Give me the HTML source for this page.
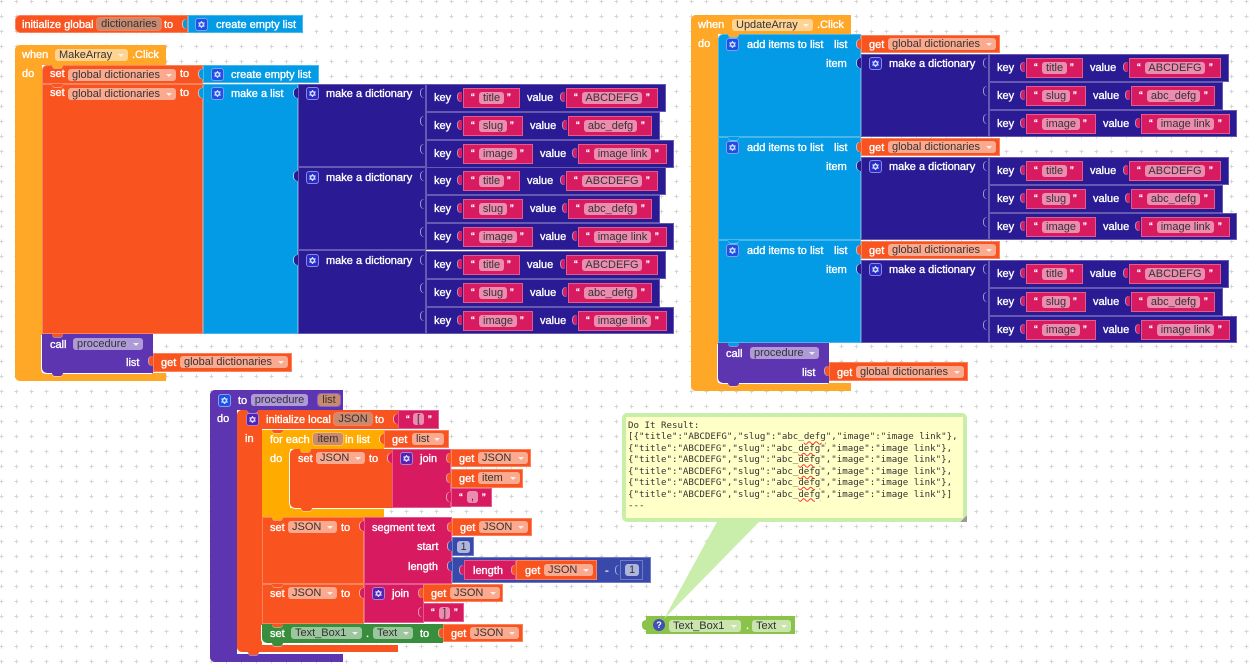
<!DOCTYPE html>
<html><head><meta charset="utf-8"><title>Blocks</title>
<style>
html,body{margin:0;padding:0;background:#fff}
#a{position:relative;width:1252px;height:671px;overflow:hidden;background:#fff;filter:blur(.3px)}
#a div,#a b,#a i,#a u,#a svg.m{position:absolute}
.k{box-shadow:inset 0 0 0 1px rgba(255,255,255,.28)}
.O{background:#f9541f}.B{background:#039be5}.D{background:#2a1a94}.P{background:#d81b60}
.Y{background:#ffa726}.F{background:#ffab00}.V{background:#5e35b1}.G{background:#388e3c}.L{background:#8bc34a}.N{background:#3949ab}
b{font:11px/14px "Liberation Sans",Arial,sans-serif;color:#fff;-webkit-text-stroke:.35px #fff;white-space:nowrap;margin-top:1px}
i{font:11px/12px "Liberation Sans",Arial,sans-serif;color:#333;height:12px;border-radius:3px;background:rgba(255,255,255,.5);text-align:center;white-space:nowrap;box-sizing:border-box}
i.d{text-align:left;padding-left:4px}
i.d:after{content:"";position:absolute;right:4px;top:5px;border-left:3px solid transparent;border-right:3px solid transparent;border-top:3px solid rgba(255,255,255,.8)}
i.v{background:#c98a70;box-shadow:0 0 0 1px rgba(255,255,255,.25);height:12px}
u{display:block;width:4px;height:10px;margin-left:1px;border-radius:4px 0 0 4px;box-shadow:-1px 0 0 rgba(255,255,255,.55);text-decoration:none}
.n{width:11px;height:3px;border-radius:0 0 5px 5px;box-shadow:0 1px 0 rgba(255,255,255,.4)}
svg.m{width:13px;height:13px;border-radius:3px;box-sizing:border-box;background:#1c50e6;box-shadow:inset 0 0 0 1px rgba(255,255,255,.45)}
svg.w{background:#2a2ac4}
svg.x{background:#5a1fb0}
.r{height:28px}
.r>u{left:-6px;top:4px}
.kl{left:8px;top:6px}
.kp,.vp{top:4px;height:20px}
.kp>u,.vp>u{left:-6px;top:4px}
.q{top:2px;left:8px}
.kf,.vf{left:16px;top:4px}
.r1{width:240px}.r1 .kp{left:37px;width:57px}.r1 .kf{width:25px}.r1 .kq{left:44px}.r1 .vl{left:101px;top:6px}.r1 .vp{left:140px;width:92px}.r1 .vf{width:60px}.r1 .vq{left:80px}
.r2{width:234px}.r2 .kp{left:37px;width:60px}.r2 .kf{width:28px}.r2 .kq{left:47px}.r2 .vl{left:104px;top:6px}.r2 .vp{left:142px;width:84px}.r2 .vf{width:53px}.r2 .vq{left:73px}
.r3{width:248px}.r3 .kp{left:37px;width:70px}.r3 .kf{width:38px}.r3 .kq{left:57px}.r3 .vl{left:114px;top:6px}.r3 .vp{left:152px;width:89px}.r3 .vf{width:57px}.r3 .vq{left:77px}
pre{position:absolute;margin:0;left:628px;top:421px;font:9.15px/11.43px "DejaVu Sans Mono",monospace;color:#333}
pre span{text-decoration:underline wavy #f33;text-decoration-thickness:1px}
</style></head><body><div id="a">
<svg width="0" height="0" style="position:absolute"><defs><symbol id="g" viewBox="0 0 13 13"><circle cx="6.5" cy="6.5" r="2" fill="none" stroke="#cfdcff" stroke-width="1.5"/><path d="M6.5 3v1.4M6.5 8.6V10M3.4 4.7l1.3.7M8.3 7.6l1.3.7M3.4 8.3l1.3-.7M8.3 5.4l1.3-.7" stroke="#cfdcff" stroke-width="1.2"/></symbol></defs></svg>
<svg width="1252" height="671" style="position:absolute;left:0;top:0"><defs><pattern id="p" x="-2" y="-2" width="15" height="15" patternUnits="userSpaceOnUse"><path d="M1.5 3.5h4M3.5 1.5v4" stroke="#d6d6d6" stroke-width="1" fill="none"/></pattern></defs><rect width="1252" height="671" fill="url(#p)"/></svg>

<!-- init global -->
<div class="k O" style="left:15px;top:15px;width:173px;height:18px;border-radius:5px 0 0 5px"></div>
<b style="left:22px;top:17px">initialize global</b><i class="v" style="left:97px;top:18px;width:64px">dictionaries</i><b style="left:164px;top:17px">to</b>
<div class="k B" style="left:188px;top:15px;width:115px;height:18px"></div><u class="B" style="left:182px;top:19px"></u>
<svg class="m" style="left:195px;top:18px"><use href="#g"/></svg><b style="left:216px;top:17px">create empty list</b>

<!-- when MakeArray -->
<div class="Y" style="left:15px;top:45px;width:151px;height:20px;border-radius:5px 0 0 0"></div>
<div class="Y" style="left:15px;top:45px;width:27px;height:336px;border-radius:5px 0 0 5px"></div>
<div class="Y" style="left:15px;top:373px;width:151px;height:8px;border-radius:0 0 0 5px"></div>
<b style="left:22px;top:47px">when</b><i class="d" style="left:55px;top:49px;width:73px">MakeArray</i><b style="left:132px;top:47px">.Click</b><b style="left:22px;top:66px">do</b>

<div class="k O" style="left:42px;top:65px;width:161px;height:19px;border-radius:5px 0 0 0"></div>
<div class="n Y" style="left:52px;top:65px"></div>
<b style="left:50px;top:66px">set</b><i class="d" style="left:68px;top:69px;width:108px">global dictionaries</i><b style="left:180px;top:66px">to</b>
<div class="k B" style="left:203px;top:65px;width:116px;height:18px"></div><u class="B" style="left:198px;top:69px"></u>
<svg class="m" style="left:211px;top:68px"><use href="#g"/></svg><b style="left:231px;top:67px">create empty list</b>

<div class="k O" style="left:42px;top:84px;width:161px;height:250px"></div>
<div class="n O" style="left:52px;top:84px"></div>
<b style="left:50px;top:85px">set</b><i class="d" style="left:68px;top:88px;width:108px">global dictionaries</i><b style="left:180px;top:85px">to</b>
<div class="k B" style="left:203px;top:84px;width:95px;height:250px"></div><u class="B" style="left:198px;top:88px"></u>
<svg class="m" style="left:211px;top:87px"><use href="#g"/></svg><b style="left:231px;top:86px">make a list</b>

<div class="k D" style="left:298px;top:84px;width:128px;height:83px"></div><u class="D" style="left:293px;top:88px"></u>
<svg class="m w" style="left:306px;top:87px"><use href="#g"/></svg><b style="left:326px;top:86px">make a dictionary</b>
<div class="k D" style="left:298px;top:167px;width:128px;height:83px"></div><u class="D" style="left:293px;top:171px"></u>
<svg class="m w" style="left:306px;top:171px"><use href="#g"/></svg><b style="left:326px;top:170px">make a dictionary</b>
<div class="k D" style="left:298px;top:250px;width:128px;height:84px"></div><u class="D" style="left:293px;top:255px"></u>
<svg class="m w" style="left:306px;top:254px"><use href="#g"/></svg><b style="left:326px;top:253px">make a dictionary</b>

<div class="k D r r1" style="left:426px;top:84px"><u class="D"></u><b class="kl">key</b><div class="k P kp"><u class="P"></u><b class="q">“</b><i class="kf">title</i><b class="q kq">”</b></div><b class="vl">value</b><div class="k P vp"><u class="P"></u><b class="q">“</b><i class="vf">ABCDEFG</i><b class="q vq">”</b></div></div>
<div class="k D r r2" style="left:426px;top:112px"><u class="D"></u><b class="kl">key</b><div class="k P kp"><u class="P"></u><b class="q">“</b><i class="kf">slug</i><b class="q kq">”</b></div><b class="vl">value</b><div class="k P vp"><u class="P"></u><b class="q">“</b><i class="vf">abc_defg</i><b class="q vq">”</b></div></div>
<div class="k D r r3" style="left:426px;top:140px"><u class="D"></u><b class="kl">key</b><div class="k P kp"><u class="P"></u><b class="q">“</b><i class="kf">image</i><b class="q kq">”</b></div><b class="vl">value</b><div class="k P vp"><u class="P"></u><b class="q">“</b><i class="vf">image link</i><b class="q vq">”</b></div></div>
<div class="k D r r1" style="left:426px;top:167px"><u class="D"></u><b class="kl">key</b><div class="k P kp"><u class="P"></u><b class="q">“</b><i class="kf">title</i><b class="q kq">”</b></div><b class="vl">value</b><div class="k P vp"><u class="P"></u><b class="q">“</b><i class="vf">ABCDEFG</i><b class="q vq">”</b></div></div>
<div class="k D r r2" style="left:426px;top:195px"><u class="D"></u><b class="kl">key</b><div class="k P kp"><u class="P"></u><b class="q">“</b><i class="kf">slug</i><b class="q kq">”</b></div><b class="vl">value</b><div class="k P vp"><u class="P"></u><b class="q">“</b><i class="vf">abc_defg</i><b class="q vq">”</b></div></div>
<div class="k D r r3" style="left:426px;top:223px;height:27px"><u class="D"></u><b class="kl">key</b><div class="k P kp"><u class="P"></u><b class="q">“</b><i class="kf">image</i><b class="q kq">”</b></div><b class="vl">value</b><div class="k P vp"><u class="P"></u><b class="q">“</b><i class="vf">image link</i><b class="q vq">”</b></div></div>
<div class="k D r r1" style="left:426px;top:251px"><u class="D"></u><b class="kl">key</b><div class="k P kp"><u class="P"></u><b class="q">“</b><i class="kf">title</i><b class="q kq">”</b></div><b class="vl">value</b><div class="k P vp"><u class="P"></u><b class="q">“</b><i class="vf">ABCDEFG</i><b class="q vq">”</b></div></div>
<div class="k D r r2" style="left:426px;top:279px"><u class="D"></u><b class="kl">key</b><div class="k P kp"><u class="P"></u><b class="q">“</b><i class="kf">slug</i><b class="q kq">”</b></div><b class="vl">value</b><div class="k P vp"><u class="P"></u><b class="q">“</b><i class="vf">abc_defg</i><b class="q vq">”</b></div></div>
<div class="k D r r3" style="left:426px;top:307px;height:27px"><u class="D"></u><b class="kl">key</b><div class="k P kp"><u class="P"></u><b class="q">“</b><i class="kf">image</i><b class="q kq">”</b></div><b class="vl">value</b><div class="k P vp"><u class="P"></u><b class="q">“</b><i class="vf">image link</i><b class="q vq">”</b></div></div>

<div class="V" style="left:42px;top:334px;width:111px;height:39px;border-radius:0 0 0 5px;box-shadow:-1px 1px 0 #fff"></div>
<div class="n O" style="left:52px;top:334px"></div><div class="n V" style="left:52px;top:373px"></div>
<b style="left:50px;top:337px">call</b><i class="d" style="left:73px;top:338px;width:70px">procedure</i><b style="left:126px;top:355px">list</b>
<div class="k O" style="left:153px;top:353px;width:139px;height:19px"></div><u class="O" style="left:148px;top:356px"></u>
<b style="left:161px;top:355px">get</b><i class="d" style="left:180px;top:356px;width:108px">global dictionaries</i>

<!-- when UpdateArray -->
<div class="Y" style="left:691px;top:15px;width:160px;height:19px;border-radius:5px 0 0 0"></div>
<div class="Y" style="left:691px;top:15px;width:27px;height:376px;border-radius:5px 0 0 5px"></div>
<div class="Y" style="left:691px;top:383px;width:160px;height:8px;border-radius:0 0 0 5px"></div>
<b style="left:698px;top:17px">when</b><i class="d" style="left:732px;top:19px;width:81px">UpdateArray</i><b style="left:817px;top:17px">.Click</b><b style="left:698px;top:36px">do</b>

<div class="k B" style="left:718px;top:34px;width:143px;height:103px;border-radius:5px 0 0 0"></div><div class="n Y" style="left:728px;top:34px"></div>
<svg class="m" style="left:726px;top:38px"><use href="#g"/></svg><b style="left:747px;top:37px">add items to list</b><b style="left:834px;top:37px">list</b><b style="left:826px;top:56px">item</b>
<div class="k O" style="left:861px;top:35px;width:139px;height:18px"></div><u class="O" style="left:856px;top:39px"></u><b style="left:869px;top:37px">get</b><i class="d" style="left:888px;top:38px;width:108px">global dictionaries</i>
<div class="k D" style="left:861px;top:54px;width:128px;height:83px"></div><u class="D" style="left:856px;top:58px"></u><svg class="m w" style="left:869px;top:57px"><use href="#g"/></svg><b style="left:889px;top:56px">make a dictionary</b>

<div class="k B" style="left:718px;top:137px;width:143px;height:103px"></div><div class="n B" style="left:728px;top:137px"></div>
<svg class="m" style="left:726px;top:141px"><use href="#g"/></svg><b style="left:747px;top:140px">add items to list</b><b style="left:834px;top:140px">list</b><b style="left:826px;top:159px">item</b>
<div class="k O" style="left:861px;top:138px;width:139px;height:18px"></div><u class="O" style="left:856px;top:142px"></u><b style="left:869px;top:140px">get</b><i class="d" style="left:888px;top:141px;width:108px">global dictionaries</i>
<div class="k D" style="left:861px;top:157px;width:128px;height:83px"></div><u class="D" style="left:856px;top:161px"></u><svg class="m w" style="left:869px;top:160px"><use href="#g"/></svg><b style="left:889px;top:159px">make a dictionary</b>

<div class="k B" style="left:718px;top:240px;width:143px;height:103px"></div><div class="n B" style="left:728px;top:240px"></div>
<svg class="m" style="left:726px;top:244px"><use href="#g"/></svg><b style="left:747px;top:243px">add items to list</b><b style="left:834px;top:243px">list</b><b style="left:826px;top:262px">item</b>
<div class="k O" style="left:861px;top:241px;width:139px;height:18px"></div><u class="O" style="left:856px;top:245px"></u><b style="left:869px;top:243px">get</b><i class="d" style="left:888px;top:244px;width:108px">global dictionaries</i>
<div class="k D" style="left:861px;top:260px;width:128px;height:83px"></div><u class="D" style="left:856px;top:264px"></u><svg class="m w" style="left:869px;top:263px"><use href="#g"/></svg><b style="left:889px;top:262px">make a dictionary</b>

<div class="k D r r1" style="left:989px;top:54px"><u class="D"></u><b class="kl">key</b><div class="k P kp"><u class="P"></u><b class="q">“</b><i class="kf">title</i><b class="q kq">”</b></div><b class="vl">value</b><div class="k P vp"><u class="P"></u><b class="q">“</b><i class="vf">ABCDEFG</i><b class="q vq">”</b></div></div>
<div class="k D r r2" style="left:989px;top:82px"><u class="D"></u><b class="kl">key</b><div class="k P kp"><u class="P"></u><b class="q">“</b><i class="kf">slug</i><b class="q kq">”</b></div><b class="vl">value</b><div class="k P vp"><u class="P"></u><b class="q">“</b><i class="vf">abc_defg</i><b class="q vq">”</b></div></div>
<div class="k D r r3" style="left:989px;top:110px;height:27px"><u class="D"></u><b class="kl">key</b><div class="k P kp"><u class="P"></u><b class="q">“</b><i class="kf">image</i><b class="q kq">”</b></div><b class="vl">value</b><div class="k P vp"><u class="P"></u><b class="q">“</b><i class="vf">image link</i><b class="q vq">”</b></div></div>
<div class="k D r r1" style="left:989px;top:157px"><u class="D"></u><b class="kl">key</b><div class="k P kp"><u class="P"></u><b class="q">“</b><i class="kf">title</i><b class="q kq">”</b></div><b class="vl">value</b><div class="k P vp"><u class="P"></u><b class="q">“</b><i class="vf">ABCDEFG</i><b class="q vq">”</b></div></div>
<div class="k D r r2" style="left:989px;top:185px"><u class="D"></u><b class="kl">key</b><div class="k P kp"><u class="P"></u><b class="q">“</b><i class="kf">slug</i><b class="q kq">”</b></div><b class="vl">value</b><div class="k P vp"><u class="P"></u><b class="q">“</b><i class="vf">abc_defg</i><b class="q vq">”</b></div></div>
<div class="k D r r3" style="left:989px;top:213px;height:27px"><u class="D"></u><b class="kl">key</b><div class="k P kp"><u class="P"></u><b class="q">“</b><i class="kf">image</i><b class="q kq">”</b></div><b class="vl">value</b><div class="k P vp"><u class="P"></u><b class="q">“</b><i class="vf">image link</i><b class="q vq">”</b></div></div>
<div class="k D r r1" style="left:989px;top:260px"><u class="D"></u><b class="kl">key</b><div class="k P kp"><u class="P"></u><b class="q">“</b><i class="kf">title</i><b class="q kq">”</b></div><b class="vl">value</b><div class="k P vp"><u class="P"></u><b class="q">“</b><i class="vf">ABCDEFG</i><b class="q vq">”</b></div></div>
<div class="k D r r2" style="left:989px;top:288px"><u class="D"></u><b class="kl">key</b><div class="k P kp"><u class="P"></u><b class="q">“</b><i class="kf">slug</i><b class="q kq">”</b></div><b class="vl">value</b><div class="k P vp"><u class="P"></u><b class="q">“</b><i class="vf">abc_defg</i><b class="q vq">”</b></div></div>
<div class="k D r r3" style="left:989px;top:316px;height:27px"><u class="D"></u><b class="kl">key</b><div class="k P kp"><u class="P"></u><b class="q">“</b><i class="kf">image</i><b class="q kq">”</b></div><b class="vl">value</b><div class="k P vp"><u class="P"></u><b class="q">“</b><i class="vf">image link</i><b class="q vq">”</b></div></div>

<div class="V" style="left:718px;top:343px;width:111px;height:40px;border-radius:0 0 0 5px;box-shadow:-1px 1px 0 #fff"></div>
<div class="n B" style="left:728px;top:343px"></div><div class="n V" style="left:728px;top:383px"></div>
<b style="left:726px;top:346px">call</b><i class="d" style="left:750px;top:347px;width:69px">procedure</i><b style="left:802px;top:365px">list</b>
<div class="k O" style="left:829px;top:362px;width:139px;height:19px"></div><u class="O" style="left:824px;top:366px"></u>
<b style="left:837px;top:365px">get</b><i class="d" style="left:856px;top:366px;width:108px">global dictionaries</i>

<!-- procedure -->
<div class="V" style="left:210px;top:390px;width:133px;height:20px;border-radius:5px 0 0 0"></div>
<div class="V" style="left:210px;top:390px;width:27px;height:272px;border-radius:5px 0 0 5px"></div>
<div class="V" style="left:210px;top:654px;width:133px;height:8px;border-radius:0 0 0 5px"></div>
<svg class="m" style="left:218px;top:394px"><use href="#g"/></svg><b style="left:238px;top:393px">to</b><i style="left:251px;top:394px;width:57px">procedure</i><i class="v" style="left:318px;top:394px;width:22px">list</i><b style="left:217px;top:411px">do</b>

<div class="O" style="left:237px;top:410px;width:161px;height:19px;border-radius:5px 0 0 0"></div>
<div class="O" style="left:237px;top:410px;width:25px;height:242px;border-radius:5px 0 0 5px"></div>
<div class="O" style="left:237px;top:645px;width:161px;height:7px;border-radius:0 0 0 5px"></div>
<div class="n V" style="left:247px;top:410px"></div><div class="n O" style="left:248px;top:652px"></div>
<svg class="m x" style="left:246px;top:413px"><use href="#g"/></svg><b style="left:266px;top:412px">initialize local</b><i class="v" style="left:334px;top:413px;width:38px">JSON</i><b style="left:375px;top:412px">to</b>
<div class="k P" style="left:398px;top:410px;width:41px;height:19px"></div><u class="P" style="left:393px;top:414px"></u><b style="left:406px;top:412px">“</b><i style="left:413px;top:413px;width:11px">[</i><b style="left:428px;top:412px">”</b>
<b style="left:245px;top:431px">in</b>

<div class="F" style="left:262px;top:430px;width:122px;height:19px;border-radius:5px 0 0 0"></div>
<div class="F" style="left:262px;top:430px;width:28px;height:87px"></div>
<div class="F" style="left:262px;top:508px;width:122px;height:9px"></div>
<div class="n O" style="left:272px;top:430px"></div>
<b style="left:270px;top:432px">for each</b><i class="v" style="left:313px;top:433px;width:30px">item</i><b style="left:345px;top:432px">in list</b>
<div class="k O" style="left:384px;top:430px;width:65px;height:18px"></div><u class="O" style="left:379px;top:434px"></u><b style="left:392px;top:432px">get</b><i class="d" style="left:412px;top:433px;width:32px">list</i>
<b style="left:270px;top:451px">do</b>

<div class="O" style="left:290px;top:449px;width:103px;height:59px;border-radius:5px 0 0 5px;box-shadow:-1px 0 0 #fff,0 1px 0 #fff"></div>
<div class="n F" style="left:300px;top:449px"></div><div class="n O" style="left:301px;top:508px"></div>
<b style="left:298px;top:451px">set</b><i class="d" style="left:316px;top:452px;width:49px">JSON</i><b style="left:369px;top:451px">to</b>
<div class="k P" style="left:392px;top:449px;width:59px;height:59px"></div><u class="P" style="left:387px;top:453px"></u>
<svg class="m x" style="left:400px;top:452px"><use href="#g"/></svg><b style="left:420px;top:451px">join</b>
<div class="k O" style="left:451px;top:449px;width:80px;height:18px"></div><u class="O" style="left:446px;top:453px"></u><b style="left:459px;top:451px">get</b><i class="d" style="left:478px;top:452px;width:50px">JSON</i>
<div class="k O" style="left:451px;top:469px;width:72px;height:19px"></div><u class="O" style="left:446px;top:473px"></u><b style="left:459px;top:471px">get</b><i class="d" style="left:478px;top:472px;width:42px">item</i>
<div class="k P" style="left:451px;top:488px;width:41px;height:19px"></div><u class="P" style="left:446px;top:492px"></u><b style="left:459px;top:490px">“</b><i style="left:467px;top:491px;width:11px">,</i><b style="left:482px;top:490px">”</b>

<div class="k O" style="left:262px;top:517px;width:102px;height:67px"></div><div class="n F" style="left:272px;top:517px"></div>
<b style="left:270px;top:520px">set</b><i class="d" style="left:288px;top:521px;width:49px">JSON</i><b style="left:341px;top:520px">to</b>
<div class="k P" style="left:364px;top:517px;width:88px;height:67px"></div><u class="P" style="left:359px;top:521px"></u>
<b style="left:372px;top:520px">segment text</b><b style="left:417px;top:539px">start</b><b style="left:408px;top:559px">length</b>
<div class="k O" style="left:452px;top:518px;width:80px;height:18px"></div><u class="O" style="left:447px;top:522px"></u><b style="left:460px;top:520px">get</b><i class="d" style="left:479px;top:521px;width:49px">JSON</i>
<div class="k N" style="left:452px;top:537px;width:22px;height:19px"></div><u class="N" style="left:447px;top:541px"></u><i style="left:457px;top:541px;width:13px;background:rgba(255,255,255,.6)">1</i>
<div class="k N" style="left:452px;top:557px;width:199px;height:26px"></div><u class="N" style="left:447px;top:561px"></u>
<div class="k P" style="left:464px;top:560px;width:52px;height:20px"></div><u class="P" style="left:459px;top:565px"></u><b style="left:473px;top:563px">length</b>
<div class="k O" style="left:516px;top:560px;width:81px;height:20px"></div><u class="O" style="left:511px;top:565px"></u><b style="left:525px;top:563px">get</b><i class="d" style="left:544px;top:564px;width:49px">JSON</i>
<b style="left:605px;top:563px">-</b>
<div class="k N" style="left:620px;top:560px;width:23px;height:20px"></div><u class="N" style="left:615px;top:565px"></u><i style="left:625px;top:564px;width:14px;background:rgba(255,255,255,.6)">1</i>

<div class="k O" style="left:262px;top:584px;width:102px;height:40px"></div><div class="n O" style="left:272px;top:584px"></div>
<b style="left:270px;top:586px">set</b><i class="d" style="left:288px;top:587px;width:49px">JSON</i><b style="left:341px;top:586px">to</b>
<div class="k P" style="left:364px;top:584px;width:60px;height:39px"></div><u class="P" style="left:359px;top:588px"></u>
<svg class="m x" style="left:372px;top:587px"><use href="#g"/></svg><b style="left:392px;top:586px">join</b>
<div class="k O" style="left:423px;top:584px;width:80px;height:18px"></div><u class="O" style="left:418px;top:588px"></u><b style="left:431px;top:586px">get</b><i class="d" style="left:450px;top:587px;width:50px">JSON</i>
<div class="k P" style="left:423px;top:603px;width:41px;height:19px"></div><u class="P" style="left:418px;top:607px"></u><b style="left:431px;top:605px">“</b><i style="left:439px;top:607px;width:11px">]</i><b style="left:454px;top:605px">”</b>

<div class="G" style="left:262px;top:624px;width:181px;height:19px;border-radius:0 0 0 5px;box-shadow:-1px 1px 0 #fff"></div><div class="n O" style="left:272px;top:624px"></div><div class="n G" style="left:272px;top:643px"></div>
<b style="left:270px;top:626px">set</b><i class="d" style="left:291px;top:627px;width:71px">Text_Box1</i><b style="left:366px;top:626px">.</b><i class="d" style="left:373px;top:627px;width:40px">Text</i><b style="left:420px;top:626px">to</b>
<div class="k O" style="left:443px;top:624px;width:80px;height:18px"></div><u class="O" style="left:438px;top:628px"></u><b style="left:451px;top:626px">get</b><i class="d" style="left:470px;top:627px;width:49px">JSON</i>

<!-- Text box block -->
<div class="L" style="left:646px;top:616px;width:149px;height:18px"></div><u class="L" style="left:641px;top:620px;box-shadow:none"></u>
<i class="d" style="left:669px;top:620px;width:72px;background:rgba(255,255,255,.55)">Text_Box1</i><b style="left:746px;top:618px">.</b><i class="d" style="left:752px;top:620px;width:39px;background:rgba(255,255,255,.55)">Text</i>
<div style="left:653px;top:619px;width:12px;height:12px;border-radius:50%;background:#3f51b5;color:#fff;font:bold 9px/12px 'Liberation Sans',sans-serif;text-align:center">?</div>

<!-- bubble -->
<svg width="1252" height="671" style="position:absolute;left:0;top:0"><polygon points="718,520 761,520 664,619" fill="#c9eeac"/></svg>
<div style="left:622px;top:413px;width:345px;height:109px;background:#c8eeaa;border-radius:5px"></div>
<div style="left:626px;top:417px;width:337px;height:101px;background:#ffffc8"></div>
<div style="left:960px;top:515px;width:7px;height:7px;background:linear-gradient(135deg,transparent 50%,#9a9a9a 50%)"></div>
<pre>Do It Result:
[{"title":"ABCDEFG","slug":"abc_<span>defg</span>","image":"image link"},
{"title":"ABCDEFG","slug":"abc_<span>defg</span>","image":"image link"},
{"title":"ABCDEFG","slug":"abc_<span>defg</span>","image":"image link"},
{"title":"ABCDEFG","slug":"abc_<span>defg</span>","image":"image link"},
{"title":"ABCDEFG","slug":"abc_<span>defg</span>","image":"image link"},
{"title":"ABCDEFG","slug":"abc_<span>defg</span>","image":"image link"}]
---</pre>
</div></body></html>
